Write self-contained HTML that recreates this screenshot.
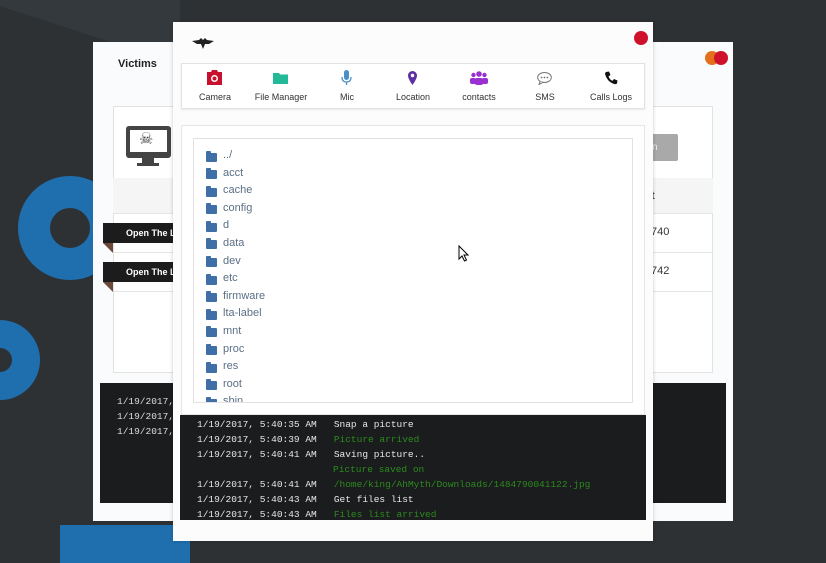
<!DOCTYPE html>
<html style="width:826px;height:563px;overflow:hidden"><head><style>
*{margin:0;padding:0;box-sizing:border-box}
body{width:826px;height:563px;background:#2e3134;position:relative;overflow:hidden;font-family:"Liberation Sans",sans-serif}
.abs{position:absolute}
.mono{font-family:"Liberation Mono",monospace}
.fi{position:absolute;left:206px;width:11px;height:9px;background:#3f6fa6;border-radius:1px}
.fi:before{content:"";position:absolute;left:0;top:-2px;width:5px;height:3px;background:#3f6fa6;border-radius:1px 1px 0 0}
.ft{position:absolute;left:223px;font-size:11px;color:#5b6f86}
.nav{position:absolute;top:92px;font-size:9px;color:#333;text-align:center;width:66px}
.log{position:absolute;font-size:9.5px;white-space:pre;color:#e8e8e8}
.g{color:#2c8a1e}
.rib{position:absolute;left:10px;width:70px;height:20px;background:#1c1c1c;color:#fff;font-size:9px;font-weight:bold;padding:5px 0 0 23px;white-space:nowrap;overflow:hidden}
</style></head><body>
<div class="abs" style="left:0;top:0;width:826px;height:563px;overflow:hidden">
<div class="abs" style="left:0;top:0;width:180px;height:563px;overflow:hidden">
 <div class="abs" style="left:-40px;top:-30px;width:300px;height:70px;background:#34393d;transform:rotate(18deg)"></div>
</div>
<div class="abs" style="left:18px;top:176px;width:104px;height:104px;border-radius:50%;border:32px solid #1f6fae"></div>
<div class="abs" style="left:-40px;top:320px;width:80px;height:80px;border-radius:50%;border:28px solid #1f6fae"></div>
<div class="abs" style="left:60px;top:525px;width:130px;height:38px;background:#1f6fae"></div>
</div>

<!-- back window -->
<div class="abs" style="left:93px;top:42px;width:640px;height:479px;background:#fafbfc">
 <div class="abs" style="left:612px;top:9px;width:14px;height:14px;border-radius:50%;background:#e4701e"></div>
 <div class="abs" style="left:621px;top:9px;width:14px;height:14px;border-radius:50%;background:#d0112b"></div>
 <div class="abs" style="left:25px;top:16px;font-size:11px;font-weight:bold;color:#222">Victims</div>
 <div class="abs" style="left:20px;top:64px;width:600px;height:267px;border:1px solid #e2e2e2;background:#fff"></div>
 <div class="abs" style="left:20px;top:136px;width:600px;height:36px;background:#f5f5f5"></div>
 <div class="abs" style="left:555px;top:148px;font-size:11px;color:#222">rt</div>
 <div class="abs" style="left:20px;top:171px;width:600px;height:1px;background:#e5e5e5"></div>
 <div class="abs" style="left:20px;top:210px;width:600px;height:1px;background:#e5e5e5"></div>
 <div class="abs" style="left:20px;top:249px;width:600px;height:1px;background:#e5e5e5"></div>
 <div class="abs" style="left:558px;top:184px;font-size:11px;color:#333">740</div>
 <div class="abs" style="left:558px;top:223px;font-size:11px;color:#333">742</div>
 <div class="abs" style="left:558px;top:92px;width:27px;height:27px;background:#a9a9a9;border-radius:2px;color:#eee;font-size:10px;padding:8px 0 0 1px">n</div>
 <div class="abs" style="left:33px;top:84px;width:45px;height:32px;background:#444;border-radius:3px"></div>
 <div class="abs" style="left:37px;top:88px;width:37px;height:22px;background:#fff"></div>
 <div class="abs" style="left:46px;top:90px;font-size:16px;color:#444;line-height:16px">☠</div>
 <div class="abs" style="left:49px;top:116px;width:12px;height:5px;background:#444"></div>
 <div class="abs" style="left:44px;top:121px;width:22px;height:3px;background:#444"></div>
 <div class="rib" style="top:181px">Open The L</div>
 <div class="abs" style="left:10px;top:201px;width:0;height:0;border-top:10px solid #6b4a3a;border-left:10px solid transparent"></div>
 <div class="rib" style="top:220px">Open The L</div>
 <div class="abs" style="left:10px;top:240px;width:0;height:0;border-top:10px solid #6b4a3a;border-left:10px solid transparent"></div>
 <div class="abs" style="left:7px;top:341px;width:626px;height:120px;background:#1b1c1e"></div>
 <div class="log mono" style="left:24px;top:354px;color:#ddd">1/19/2017,</div>
 <div class="log mono" style="left:24px;top:369px;color:#ddd">1/19/2017,</div>
 <div class="log mono" style="left:24px;top:384px;color:#ddd">1/19/2017,</div>
</div>

<!-- front window -->
<div class="abs" style="left:173px;top:22px;width:480px;height:519px;background:#fcfcfd;box-shadow:0 0 4px rgba(0,0,0,.2)">
 <div class="abs" style="left:461px;top:9px;width:14px;height:14px;border-radius:50%;background:#d0112b"></div>
 <svg class="abs" style="left:19px;top:16px" width="22" height="12" viewBox="0 0 22 12"><path d="M0 3 L7 2 L9 0 L11 2 L13 0 L15 2 L22 3 L17 6 L13 6 L11 11 L9 6 L5 6Z" fill="#222"/></svg>
 <div class="abs" style="left:8px;top:41px;width:464px;height:46px;background:#fff;border:1px solid #e3e3e3;box-shadow:0 1px 2px rgba(0,0,0,.08)"></div>
 <div class="abs" style="left:8px;top:103px;width:464px;height:290px;background:#fff;border:1px solid #e6e6e6"></div>
 <div class="abs" style="left:20px;top:116px;width:440px;height:265px;background:#fff;border:1px solid #e2e2e2"></div>
</div>
<!-- nav icons -->
<svg class="abs" style="left:206px;top:70px" width="17" height="15" viewBox="0 0 17 15"><path d="M5 2 L6 0 H11 L12 2 H16 V15 H1 V2Z" fill="#c8102e"/><circle cx="8.5" cy="8.5" r="3.5" fill="#fff"/><circle cx="8.5" cy="8.5" r="2" fill="#c8102e"/></svg>
<svg class="abs" style="left:273px;top:72px" width="15" height="12" viewBox="0 0 15 12"><path d="M0 1 H6 L7 2.5 H15 V12 H0Z" fill="#21b997"/></svg>
<svg class="abs" style="left:341px;top:70px" width="11" height="16" viewBox="0 0 11 16"><rect x="3" y="0" width="5" height="10" rx="2.5" fill="#4a90c8"/><path d="M1 7 Q1 12 5.5 12 Q10 12 10 7" stroke="#4a90c8" fill="none" stroke-width="1.3"/><path d="M5.5 12 V15" stroke="#4a90c8" stroke-width="1.3"/></svg>
<svg class="abs" style="left:408px;top:71px" width="9" height="14" viewBox="0 0 9 14"><path d="M4.5 0 A4.5 4.5 0 0 1 9 4.5 C9 8 4.5 14 4.5 14 C4.5 14 0 8 0 4.5 A4.5 4.5 0 0 1 4.5 0Z" fill="#5d2fa0"/><circle cx="4.5" cy="4.5" r="1.7" fill="#fff"/></svg>
<svg class="abs" style="left:470px;top:71px" width="18" height="14" viewBox="0 0 18 14"><g fill="#9b30d0"><circle cx="9" cy="3" r="2.8"/><circle cx="3.5" cy="4" r="2.2"/><circle cx="14.5" cy="4" r="2.2"/><rect x="5" y="7" width="8" height="7" rx="2"/><rect x="0" y="7" width="6" height="6" rx="2"/><rect x="12" y="7" width="6" height="6" rx="2"/></g></svg>
<svg class="abs" style="left:537px;top:72px" width="15" height="13" viewBox="0 0 15 13"><ellipse cx="7.5" cy="5.5" rx="6.8" ry="5" fill="none" stroke="#777" stroke-width="1"/><path d="M3 9.5 L2 12.5 L6 10.3" fill="#fff" stroke="#777" stroke-width="1"/><circle cx="4.6" cy="5.5" r=".9" fill="#777"/><circle cx="7.5" cy="5.5" r=".9" fill="#777"/><circle cx="10.4" cy="5.5" r=".9" fill="#777"/></svg>
<svg class="abs" style="left:604px;top:71px" width="14" height="14" viewBox="0 0 14 14"><path d="M2 1 L5 0.5 L6.5 4 L4.5 5.5 Q6 9 8.5 9.8 L10 8 L13.5 9.5 L13 12.5 Q12 13.5 10 13 Q3 10.5 1 3 Q1 1.7 2 1Z" fill="#111"/></svg>
<div class="nav" style="left:182px">Camera</div>
<div class="nav" style="left:248px">File Manager</div>
<div class="nav" style="left:314px">Mic</div>
<div class="nav" style="left:380px">Location</div>
<div class="nav" style="left:446px">contacts</div>
<div class="nav" style="left:512px">SMS</div>
<div class="nav" style="left:578px">Calls Logs</div>

<!-- file list -->
<div class="fi" style="top:153px"></div><div class="ft" style="top:149px">../</div>
<div class="fi" style="top:170px"></div><div class="ft" style="top:167px">acct</div>
<div class="fi" style="top:188px"></div><div class="ft" style="top:184px">cache</div>
<div class="fi" style="top:205px"></div><div class="ft" style="top:202px">config</div>
<div class="fi" style="top:223px"></div><div class="ft" style="top:219px">d</div>
<div class="fi" style="top:240px"></div><div class="ft" style="top:237px">data</div>
<div class="fi" style="top:258px"></div><div class="ft" style="top:255px">dev</div>
<div class="fi" style="top:276px"></div><div class="ft" style="top:272px">etc</div>
<div class="fi" style="top:293px"></div><div class="ft" style="top:290px">firmware</div>
<div class="fi" style="top:311px"></div><div class="ft" style="top:307px">lta-label</div>
<div class="fi" style="top:328px"></div><div class="ft" style="top:325px">mnt</div>
<div class="fi" style="top:346px"></div><div class="ft" style="top:343px">proc</div>
<div class="fi" style="top:364px"></div><div class="ft" style="top:360px">res</div>
<div class="fi" style="top:381px"></div><div class="ft" style="top:378px">root</div>
<div class="abs" style="left:195px;top:393px;width:436px;height:9px;overflow:hidden"><div class="fi" style="left:11px;top:6px"></div><div class="ft" style="left:28px;top:2px">sbin</div></div>
<svg class="abs" style="left:458px;top:245px" width="11" height="17" viewBox="0 0 11 17"><path d="M1 1 V14 L4 11 L6.5 16 L8.5 15 L6 10 H10Z" fill="#fff" stroke="#000" stroke-width="1"/></svg>

<!-- front console -->
<div class="abs" style="left:180px;top:415px;width:466px;height:105px;background:#1b1c1e;overflow:hidden">
 <div class="log mono" style="left:17px;top:4px">1/19/2017, 5:40:35 AM   Snap a picture</div>
 <div class="log mono" style="left:17px;top:19px">1/19/2017, 5:40:39 AM   <span class="g">Picture arrived</span></div>
 <div class="log mono" style="left:17px;top:34px">1/19/2017, 5:40:41 AM   Saving picture..</div>
 <div class="log mono g" style="left:153px;top:49px">Picture saved on</div>
 <div class="log mono" style="left:17px;top:64px">1/19/2017, 5:40:41 AM   <span class="g">/home/king/AhMyth/Downloads/1484790041122.jpg</span></div>
 <div class="log mono" style="left:17px;top:79px">1/19/2017, 5:40:43 AM   Get files list</div>
 <div class="log mono" style="left:17px;top:94px">1/19/2017, 5:40:43 AM   <span class="g">Files list arrived</span></div>
</div>
</body></html>
